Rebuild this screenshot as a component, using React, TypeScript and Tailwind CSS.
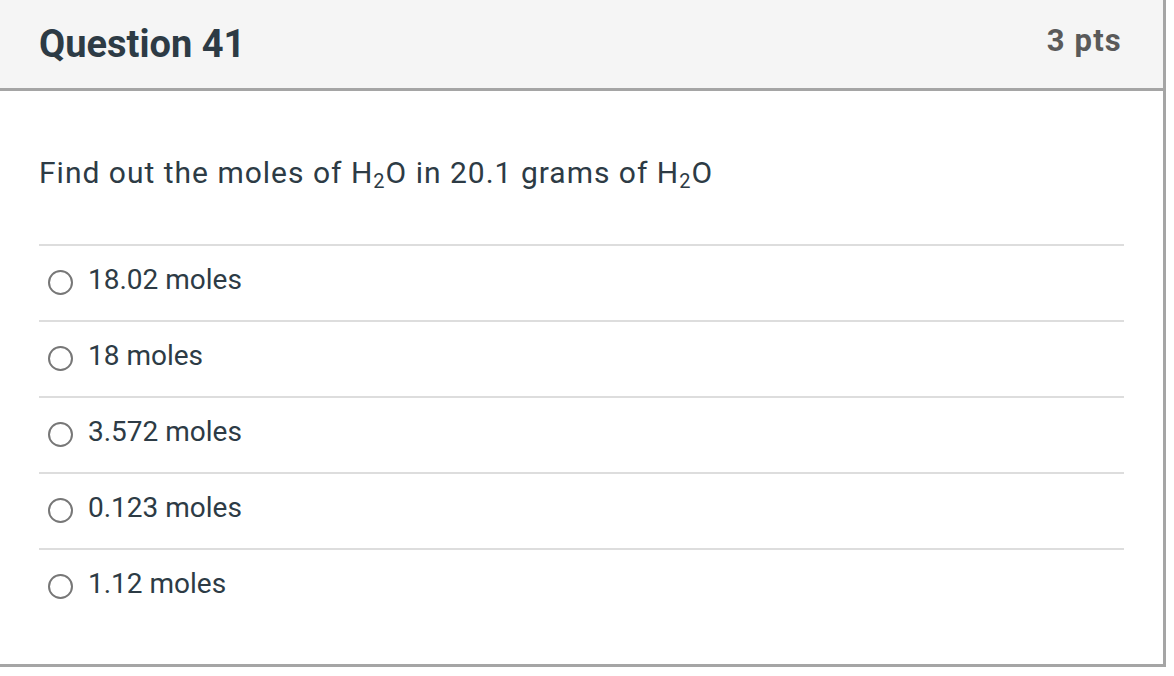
const options = ['18.02 moles', '18 moles', '3.572 moles', '0.123 moles', '1.12 moles'];

export default function App() {
  return (
    <div className="min-h-screen bg-white" style={{ fontFamily: 'Roboto, "Liberation Sans", sans-serif' }}>
      <div className="w-[1166px] border-r-[3px] border-b-[3px] border-[#a5a5a5] bg-white">
        {/* Header */}
        <div className="h-[91px] flex items-center justify-between pl-[39px] pr-[41px] bg-[#f5f5f5] border-b-[3px] border-[#a5a5a5]">
          <h2 className="text-[38px] leading-[44px] font-bold text-[#2d3b45]">Question 41</h2>
          <span className="text-[31px] leading-[36px] tracking-[1.2px] font-bold text-[#5a5a5a] mb-[7px]">3 pts</span>
        </div>

        {/* Body */}
        <div className="pl-[39px] pr-[39px] pb-[40px]">
          <div className="h-[153px] pt-[64px] text-[30px] leading-[36px] tracking-[1px] text-[#2d3b45]">
            Find out the moles of H<sub className="text-[20px] leading-none">2</sub>O in 20.1 grams of H
            <sub className="text-[20px] leading-none">2</sub>O
          </div>
          {options.map(o => (
            <label key={o} className="h-[76px] flex items-center border-t-2 border-[#dddddd] pb-[6px]">
              <span className="ml-[9px] w-[25px] h-[25px] rounded-full border-2 border-[#777777] bg-white mt-[4px] shrink-0"></span>
              <span className="ml-[15px] text-[28px] leading-[32px] text-[#2d3b45]">{o}</span>
            </label>
          ))}
        </div>
      </div>
    </div>
  );
}
